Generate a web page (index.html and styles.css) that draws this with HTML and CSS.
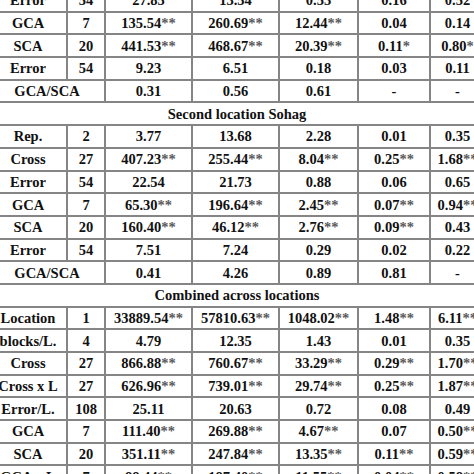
FILE: index.html
```html
<!DOCTYPE html>
<html>
<head>
<meta charset="utf-8">
<link rel="stylesheet" href="styles.css">
</head>
<body>
<div class="frame">
<table class="anova">
<colgroup>
<col class="c1"><col class="c2"><col class="c3"><col class="c4"><col class="c5"><col class="c6"><col class="c7">
</colgroup>
<tbody>
<tr><td>Error</td><td>54</td><td>27.85</td><td>13.54</td><td>0.53</td><td>0.16</td><td>0.52</td></tr>
<tr><td>GCA</td><td>7</td><td>135.54<span class="s">**</span></td><td>260.69<span class="s">**</span></td><td>12.44<span class="s">**</span></td><td>0.04</td><td>0.14</td></tr>
<tr><td>SCA</td><td>20</td><td>441.53<span class="s">**</span></td><td>468.67<span class="s">**</span></td><td>20.39<span class="s">**</span></td><td>0.11<span class="s">*</span></td><td>0.80<span class="s">*</span></td></tr>
<tr><td>Error</td><td>54</td><td>9.23</td><td>6.51</td><td>0.18</td><td>0.03</td><td>0.11</td></tr>
<tr><td colspan="2">GCA/SCA</td><td>0.31</td><td>0.56</td><td>0.61</td><td>-</td><td>-</td></tr>
<tr class="section"><td colspan="7">Second location Sohag</td></tr>
<tr><td>Rep.</td><td>2</td><td>3.77</td><td>13.68</td><td>2.28</td><td>0.01</td><td>0.35</td></tr>
<tr><td>Cross</td><td>27</td><td>407.23<span class="s">**</span></td><td>255.44<span class="s">**</span></td><td>8.04<span class="s">**</span></td><td>0.25<span class="s">**</span></td><td>1.68<span class="s">**</span></td></tr>
<tr><td>Error</td><td>54</td><td>22.54</td><td>21.73</td><td>0.88</td><td>0.06</td><td>0.65</td></tr>
<tr><td>GCA</td><td>7</td><td>65.30<span class="s">**</span></td><td>196.64<span class="s">**</span></td><td>2.45<span class="s">**</span></td><td>0.07<span class="s">**</span></td><td>0.94<span class="s">**</span></td></tr>
<tr><td>SCA</td><td>20</td><td>160.40<span class="s">**</span></td><td>46.12<span class="s">**</span></td><td>2.76<span class="s">**</span></td><td>0.09<span class="s">**</span></td><td>0.43</td></tr>
<tr><td>Error</td><td>54</td><td>7.51</td><td>7.24</td><td>0.29</td><td>0.02</td><td>0.22</td></tr>
<tr><td colspan="2">GCA/SCA</td><td>0.41</td><td>4.26</td><td>0.89</td><td>0.81</td><td>-</td></tr>
<tr class="section"><td colspan="7">Combined across locations</td></tr>
<tr><td>Location</td><td>1</td><td>33889.54<span class="s">**</span></td><td>57810.63<span class="s">**</span></td><td>1048.02<span class="s">**</span></td><td>1.48<span class="s">**</span></td><td>6.11<span class="s">**</span></td></tr>
<tr><td>blocks/L.</td><td>4</td><td>4.79</td><td>12.35</td><td>1.43</td><td>0.01</td><td>0.35</td></tr>
<tr><td>Cross</td><td>27</td><td>866.88<span class="s">**</span></td><td>760.67<span class="s">**</span></td><td>33.29<span class="s">**</span></td><td>0.29<span class="s">**</span></td><td>1.70<span class="s">**</span></td></tr>
<tr><td>Cross x L</td><td>27</td><td>626.96<span class="s">**</span></td><td>739.01<span class="s">**</span></td><td>29.74<span class="s">**</span></td><td>0.25<span class="s">**</span></td><td>1.87<span class="s">**</span></td></tr>
<tr><td>Error/L.</td><td>108</td><td>25.11</td><td>20.63</td><td>0.72</td><td>0.08</td><td>0.49</td></tr>
<tr><td>GCA</td><td>7</td><td>111.40<span class="s">**</span></td><td>269.88<span class="s">**</span></td><td>4.67<span class="s">**</span></td><td>0.07</td><td>0.50<span class="s">**</span></td></tr>
<tr><td>SCA</td><td>20</td><td>351.11<span class="s">**</span></td><td>247.84<span class="s">**</span></td><td>13.35<span class="s">**</span></td><td>0.11<span class="s">**</span></td><td>0.59<span class="s">**</span></td></tr>
<tr><td>GCA x L</td><td>7</td><td>88.44<span class="s">**</span></td><td>187.40<span class="s">**</span></td><td>11.55<span class="s">**</span></td><td>0.04<span class="s">**</span></td><td>0.58<span class="s">**</span></td></tr>
</tbody>
</table>
</div>
</body>
</html>
```

FILE: styles.css
```css
html, body {
  margin: 0;
  padding: 0;
  background: #ffffff;
}
.frame {
  width: 474px;
  height: 474px;
  overflow: hidden;
}
.anova {
  border-collapse: collapse;
  table-layout: fixed;
  width: 496px;
  margin-left: -12px;
  margin-top: -12px;
  font-family: "Liberation Serif", "Times New Roman", serif;
  font-weight: bold;
  font-size: 14.5px;
  color: #111111;
}
.c1 { width: 78px; }
.c2 { width: 38px; }
.c3 { width: 87px; }
.c4 { width: 87px; }
.c5 { width: 79px; }
.c6 { width: 72px; }
.c7 { width: 55px; }
.anova tr {
  height: 22.7px;
}
.anova td {
  border: 2px solid #858585;
  text-align: center;
  vertical-align: middle;
  padding: 0;
  white-space: nowrap;
  overflow: hidden;
  line-height: 16px;
}
.anova .section td {
  border-left: none;
  border-right: none;
}
.s {
  color: #5a5a5a;
}
```
